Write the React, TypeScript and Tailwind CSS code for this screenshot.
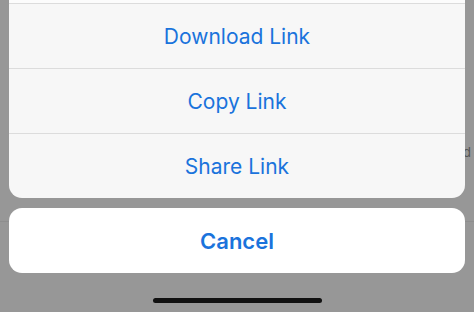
import React from 'react';

const actions = ['Download Link', 'Copy Link', 'Share Link'];

export default function App() {
  return (
    <div
      className="relative w-[474px] h-[312px] overflow-hidden bg-[#979797] px-[9px]"
      style={{ fontFamily: 'Inter, "Noto Sans", "Liberation Sans", sans-serif' }}
    >
      {/* page content peeking out behind the sheet */}
      <div className="absolute left-0 right-0 top-[221px] h-px bg-[#8e8e8e]" />
      <span className="absolute left-[463px] top-[146px] text-[13px] leading-none text-[#555]">d</span>

      <div className="relative flex flex-col">
        <div className="flex flex-col rounded-b-[13px] bg-[#f7f7f7] overflow-hidden">
          <div className="h-[3px] bg-[#fcfcfc]" />
          {actions.map(label => (
            <button
              key={label}
              className="h-[65px] border-t border-[#dcdcdc] flex items-center justify-center pt-px text-[21px] text-[#1a73dc]"
            >
              {label}
            </button>
          ))}
        </div>

        <button className="mt-[10px] h-[65px] rounded-[13px] bg-white flex items-center justify-center pt-px text-[22px] font-semibold text-[#1a73dc]">
          Cancel
        </button>

        <div className="mt-[25px] mx-auto w-[169px] h-[5px] rounded-full bg-[#111]" />
      </div>
    </div>
  );
}
